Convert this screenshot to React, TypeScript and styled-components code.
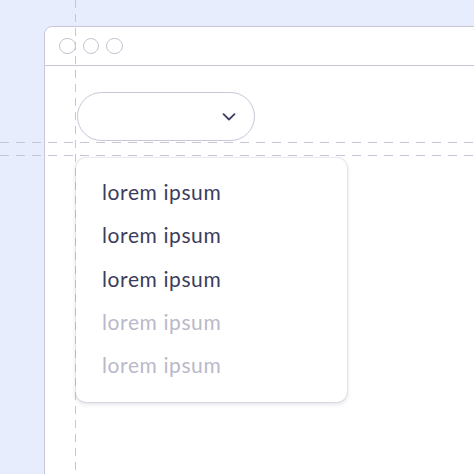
import React from "react";
import styled, { createGlobalStyle } from "styled-components";

const Global = createGlobalStyle`
  html, body { margin: 0; padding: 0; }
  body {
    background: #e7edfc;
    font-family: Lato, "Open Sans", sans-serif;
    overflow: hidden;
  }
`;

const Page = styled.div`
  position: relative;
  width: 474px;
  height: 474px;
  overflow: hidden;
  padding: 26px 0 0 44px;
  box-sizing: border-box;
`;

const Window = styled.div`
  width: 500px;
  height: 480px;
  background: #ffffff;
  border: 1.6px solid #c7c6da;
  border-radius: 8px 0 0 0;
  box-sizing: border-box;
  display: flex;
  flex-direction: column;
`;

const TitleBar = styled.div`
  height: 39px;
  border-bottom: 1.6px solid #c7c6da;
  display: flex;
  align-items: center;
  gap: 7px;
  padding-left: 14px;
  box-sizing: border-box;
`;

const Dot = styled.span`
  width: 16.5px;
  height: 16.5px;
  border-radius: 50%;
  border: 1.8px solid #c5c4d3;
  box-sizing: border-box;
`;

const Content = styled.div`
  padding: 26px 0 0 32px;
  display: flex;
  flex-direction: column;
  align-items: flex-start;
`;

const SelectButton = styled.div`
  width: 178px;
  height: 49px;
  border: 1.6px solid #c7c6da;
  border-radius: 25px;
  box-sizing: border-box;
  display: flex;
  align-items: center;
  justify-content: flex-end;
  padding-right: 18px;
  background: #fff;
`;

const Menu = styled.div`
  margin-top: 17px;
  margin-left: -1px;
  width: 271px;
  height: 244px;
  box-sizing: border-box;
  background: #fff;
  border-radius: 10px;
  box-shadow: 0 2px 5px rgba(70, 70, 110, 0.18), 0 0 0 1px rgba(200, 200, 220, 0.3);
  padding: 12px 0 0 26px;
  display: flex;
  flex-direction: column;
  position: relative;
  z-index: 2;
`;

const Item = styled.div<{ $muted?: boolean }>`
  height: 43.3px;
  display: flex;
  align-items: center;
  font-size: 21px;
  letter-spacing: 0.6px;
  color: ${(p) => (p.$muted ? "#bab9c9" : "#3b3d5c")};
`;

const VGuide = styled.div`
  position: absolute;
  top: 0;
  bottom: 0;
  left: 75px;
  width: 1px;
  background: repeating-linear-gradient(
    to bottom,
    #c6c6d6 0 8px,
    transparent 8px 14px
  );
  z-index: 1;
`;

const HGuide = styled.div<{ $top: number }>`
  position: absolute;
  left: 0;
  right: 0;
  top: ${(p) => p.$top}px;
  height: 1px;
  background: repeating-linear-gradient(
    to right,
    #c6c6d6 0 9px,
    transparent 9px 16px
  );
  z-index: 1;
`;

const items = [false, false, false, true, true];

export default function App() {
  return (
    <>
      <Global />
      <Page>
        <Window>
          <TitleBar>
            <Dot />
            <Dot />
            <Dot />
          </TitleBar>
          <Content>
            <SelectButton>
              <svg width="14" height="8" viewBox="0 0 14 8" fill="none">
                <path
                  d="M1.5 1.2 L7 6.5 L12.5 1.2"
                  stroke="#3d3f5e"
                  strokeWidth="1.8"
                  strokeLinecap="round"
                  strokeLinejoin="round"
                />
              </svg>
            </SelectButton>
            <Menu>
              {items.map((m, i) => (
                <Item key={i} $muted={m}>
                  lorem ipsum
                </Item>
              ))}
            </Menu>
          </Content>
        </Window>
        <VGuide />
        <HGuide $top={142} />
        <HGuide $top={155} />
      </Page>
    </>
  );
}
